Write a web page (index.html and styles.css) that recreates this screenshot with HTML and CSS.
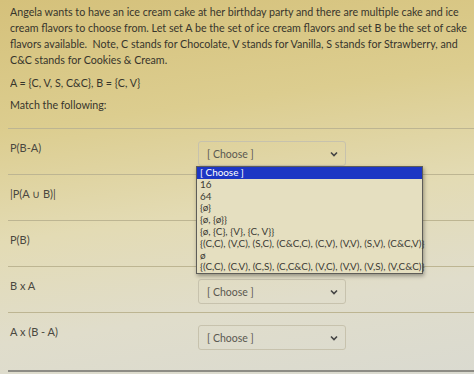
FILE: index.html
```html
<!DOCTYPE html>
<html>
<head>
  <title>Match the following</title>
  <link rel="stylesheet" href="styles.css">
</head>
<body>
  <div class="pergunta">
    <p class="texto">Angela wants to have an ice cream cake at her birthday party and there are multiple cake and ice<br>cream flavors to choose from. Let set A be the set of ice cream flavors and set B be the set of cake<br>flavors available.&nbsp; Note, C stands for Chocolate, V stands for Vanilla, S stands for Strawberry, and<br>C&amp;C stands for Cookies &amp; Cream.</p>
    <p class="conjuntos">A = {C, V, S, C&amp;C}, B = {C, V}</p>
    <p class="instrucao">Match the following:</p>
  </div>

  <div class="lista">
    <div class="linha">
      <div class="nome">P(B-A)</div>
      <div class="escolha">
        <span>[ Choose ]</span>
        <svg class="seta" width="8" height="6" viewBox="0 0 8 6"><path d="M1 1.5 L4 4.5 L7 1.5" fill="none" stroke="#444" stroke-width="1.6"/></svg>
      </div>
      <div class="opcoes">
        <div class="opcao ativa">[ Choose ]</div>
        <div class="opcao">16</div>
        <div class="opcao">64</div>
        <div class="opcao">{ø}</div>
        <div class="opcao">{ø, {ø}}</div>
        <div class="opcao">{ø, {C}, {V}, {C, V}}</div>
        <div class="opcao">{(C,C), (V,C), (S,C), (C&amp;C,C), (C,V), (V,V), (S,V), (C&amp;C,V)}</div>
        <div class="opcao">ø</div>
        <div class="opcao">{(C,C), (C,V), (C,S), (C,C&amp;C), (V,C), (V,V), (V,S), (V,C&amp;C)}</div>
      </div>
    </div>
    <div class="linha">
      <div class="nome">|P(A ∪ B)|</div>
    </div>
    <div class="linha">
      <div class="nome">P(B)</div>
    </div>
    <div class="linha">
      <div class="nome">B x A</div>
      <div class="escolha">
        <span>[ Choose ]</span>
        <svg class="seta" width="8" height="6" viewBox="0 0 8 6"><path d="M1 1.5 L4 4.5 L7 1.5" fill="none" stroke="#444" stroke-width="1.6"/></svg>
      </div>
    </div>
    <div class="linha ultima">
      <div class="nome">A x (B - A)</div>
      <div class="escolha">
        <span>[ Choose ]</span>
        <svg class="seta" width="8" height="6" viewBox="0 0 8 6"><path d="M1 1.5 L4 4.5 L7 1.5" fill="none" stroke="#444" stroke-width="1.6"/></svg>
      </div>
    </div>
  </div>
</body>
</html>
```

FILE: styles.css
```css
body {
  font-family: Lato, "Open Sans", sans-serif;
  color: #3b3a33;
  margin: 0;
  height: 374px;
  overflow: hidden;
  background: linear-gradient(172deg, #d5c17b 0%, #dccd8f 30%, #e3dbb4 55%, #e0ddcb 78%, #dadad0 100%);
}

.pergunta {
  padding: 4px 10px 0 10px;
}

.pergunta p {
  margin: 0;
  font-size: 12px;
  line-height: 16px;
  white-space: nowrap;
  color: #37352c;
  transform: scaleX(0.89); /* a foto deixa o texto mais estreito */
  transform-origin: left top;
}

.conjuntos {
  margin-top: 7px !important;
}

.instrucao {
  margin-top: 6px !important;
}

.lista {
  margin-top: 15px;
  margin-left: 8px;
}

.linha {
  position: relative;
  display: flex;
  height: 45px;
  border-top: 1px solid #bdb592;
}

.ultima {
  height: 57px;
  border-bottom: 2px solid #8d8c85;
}

.nome {
  width: 188px;
  padding: 12px 0 0 2px;
  font-size: 11px;
  color: #4a4840;
}

.escolha {
  display: flex;
  align-items: center;
  justify-content: space-between;
  box-sizing: border-box;
  margin-top: 12px;
  width: 148px;
  height: 25px;
  padding: 0 7px 0 8px;
  border: 1px solid #c7c2ad;
  border-radius: 3px;
  font-size: 10.5px;
  color: #5a5850;
}

.opcoes {
  position: absolute;
  left: 188px;
  top: 37px;
  width: 225px;
  border: 1px solid #5e5d58;
  background: #e5dfc0;
  box-shadow: 1px 2px 4px rgba(0, 0, 0, 0.35);
  font-size: 9.9px;
  color: #3b3a33;
  z-index: 2;
}

.opcao {
  height: 11.8px;
  line-height: 11.8px;
  padding-left: 3px;
  white-space: nowrap;
}

.ativa {
  background-color: #1c36c4;
  color: white;
}
```
